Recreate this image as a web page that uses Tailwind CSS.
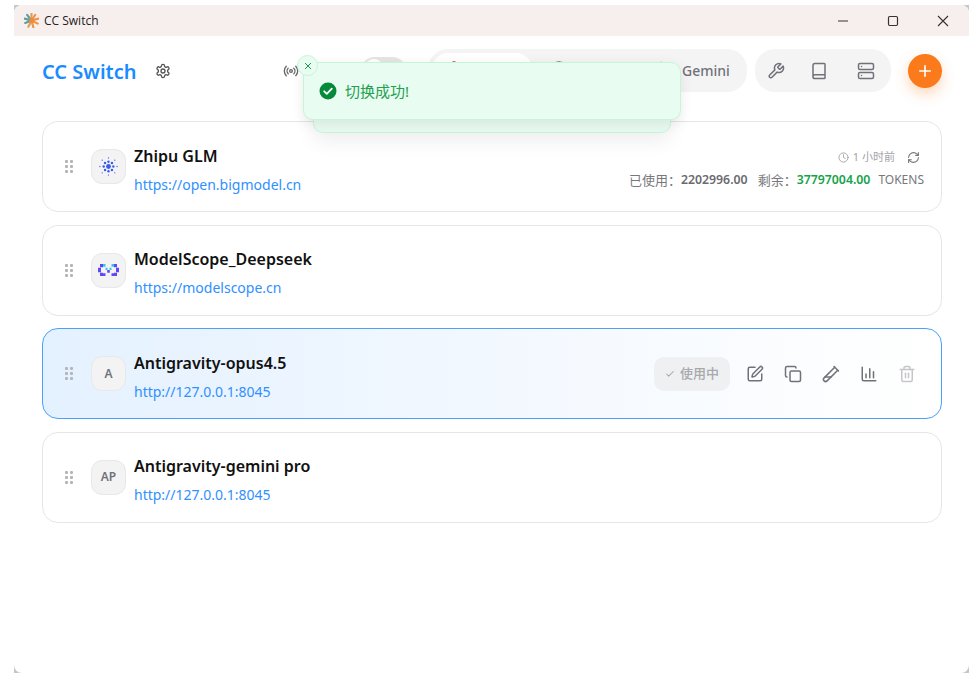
<!DOCTYPE html>
<html lang="zh"><head><meta charset="utf-8"><title>CC Switch</title>
<script src="https://cdn.jsdelivr.net/npm/@tailwindcss/browser@4"></script></head>
<body class="bg-white font-['Noto_Sans','Noto_Sans_CJK_SC',sans-serif] w-[979px] h-[686px] overflow-hidden">
<div class="ml-[14px] mt-[5px] w-[955px] h-[668px] bg-[#c6c6c6]">
<div class="relative w-full h-full bg-white rounded-[8px] overflow-hidden flex flex-col">
  <!-- title bar -->
  <div class="h-[31px] shrink-0 bg-[#f7efee] flex items-center pl-[10px]">
    <svg class="w-[15px] h-[15px]" viewBox="0 0 24 24" fill="none" stroke-width="3.4" stroke-linecap="round">
      <path stroke="#5f9ea0" d="M12 12 5 3M12 12 1 9M12 12 2 16"/>
      <path stroke="#d9a05b" d="M12 12 12 1M12 12 7 22"/>
      <path stroke="#ee9448" d="M12 12 18 3M12 12 23 9M12 12 22 17M12 12 15 23"/>
      <circle cx="12" cy="12" r="4" fill="#ee8a3e"/>
    </svg>
    <span class="ml-[5px] text-[12px] text-[#222] font-['Open_Sans',sans-serif]">CC Switch</span>
    <div class="ml-auto flex items-center h-full text-[#222]">
      <div class="w-[50px] flex justify-center"><svg class="w-[12px] h-[12px]" viewBox="0 0 12 12"><path d="M1 6h10" stroke="#333" stroke-width="1"/></svg></div>
      <div class="w-[50px] flex justify-center"><svg class="w-[12px] h-[12px]" viewBox="0 0 12 12" fill="none"><rect x="1.5" y="1.5" width="9" height="9" rx="1.2" stroke="#333" stroke-width="1.2"/></svg></div>
      <div class="w-[50px] mr-[1px] flex justify-center"><svg class="w-[12px] h-[12px]" viewBox="0 0 12 12" fill="none"><path d="M1 1l10 10M11 1 1 11" stroke="#333" stroke-width="1.1"/></svg></div>
    </div>
  </div>

  <!-- header -->
  <div class="h-[85px] shrink-0 pl-[28px] pr-[27px] flex items-center pb-[15px]">
    <span class="w-[93px] shrink-0 mt-[2px] whitespace-nowrap text-[20px] font-semibold text-[#1a8cff] leading-none">CC Switch</span>
    <svg class="ml-[20px] shrink-0 w-[16px] h-[16px] text-[#555]" viewBox="0 0 24 24" fill="none" stroke="currentColor" stroke-width="2" stroke-linecap="round" stroke-linejoin="round"><path d="M12.22 2h-.44a2 2 0 0 0-2 2v.18a2 2 0 0 1-1 1.73l-.43.25a2 2 0 0 1-2 0l-.15-.08a2 2 0 0 0-2.73.73l-.22.38a2 2 0 0 0 .73 2.73l.15.1a2 2 0 0 1 1 1.72v.51a2 2 0 0 1-1 1.74l-.15.09a2 2 0 0 0-.73 2.73l.22.38a2 2 0 0 0 2.73.73l.15-.08a2 2 0 0 1 2 0l.43.25a2 2 0 0 1 1 1.73V20a2 2 0 0 0 2 2h.44a2 2 0 0 0 2-2v-.18a2 2 0 0 1 1-1.73l.43-.25a2 2 0 0 1 2 0l.15.08a2 2 0 0 0 2.73-.73l.22-.39a2 2 0 0 0-.73-2.73l-.15-.08a2 2 0 0 1-1-1.74v-.5a2 2 0 0 1 1-1.74l.15-.09a2 2 0 0 0 .73-2.73l-.22-.38a2 2 0 0 0-2.73-.73l-.15.08a2 2 0 0 1-2 0l-.43-.25a2 2 0 0 1-1-1.73V4a2 2 0 0 0-2-2z"/><circle cx="12" cy="12" r="3"/></svg>

    <svg class="ml-[112px] shrink-0 w-[16px] h-[16px] text-[#666]" viewBox="0 0 24 24" fill="none" stroke="currentColor" stroke-width="2" stroke-linecap="round" stroke-linejoin="round"><path d="M4.9 19.1C1 15.2 1 8.8 4.9 4.9"/><path d="M7.8 16.2c-2.3-2.3-2.3-6.1 0-8.5"/><circle cx="12" cy="12" r="2"/><path d="M16.2 7.8c2.3 2.3 2.3 6.1 0 8.5"/><path d="M19.1 4.9C23 8.8 23 15.1 19.1 19"/></svg>
    <div class="ml-[63px] shrink-0 w-[43px] h-[24px] rounded-full bg-[#e5e5e5] mt-[-4px]"><div class="w-[20px] h-[20px] m-[2px] rounded-full bg-white"></div></div>

    <div class="ml-[23px] mt-[-1px] shrink-0 w-[319px] h-[43px] rounded-[20px] bg-[#f4f4f5] flex items-center p-[4px] text-[14px] font-medium text-[#71717a]">
      <div class="w-[100px] h-[35px] rounded-[16px] bg-white flex items-center justify-center gap-[10px] text-[#333]"><svg class="w-[20px] h-[20px]" viewBox="2 2 20 20"><path d="M12 2v20M2 12h20M5 5l14 14M19 5 5 19" stroke="#d97757" stroke-width="3"/></svg>Claude</div>
      <div class="w-[104px] flex items-center justify-center gap-[8px]"><svg class="w-[20px] h-[20px]" viewBox="1.500 1.500 21 21"><circle cx="12" cy="12" r="9" fill="none" stroke="#666" stroke-width="2.500"/></svg>Codex</div>
      <div class="flex-1 flex items-center justify-center gap-[11px] pl-[2px]"><svg class="w-[20px] h-[20px]" viewBox="2 2 20 20"><path d="M12 2c1 6 4 9 10 10-6 1-9 4-10 10-1-6-4-9-10-10 6-1 9-4 10-10z" fill="#d0453a"/></svg>Gemini</div>
    </div>

    <div class="ml-[8px] mt-[-1px] shrink-0 w-[136px] h-[43px] rounded-[20px] bg-[#f4f4f5] flex items-center pl-[12px] text-[#71717a]">
      <svg class="w-[18px] h-[18px]" viewBox="0 0 24 24" fill="none" stroke="currentColor" stroke-width="2" stroke-linecap="round" stroke-linejoin="round"><path d="M14.7 6.3a1 1 0 0 0 0 1.4l1.6 1.6a1 1 0 0 0 1.4 0l3.77-3.77a6 6 0 0 1-7.94 7.94l-6.91 6.91a2.12 2.12 0 0 1-3-3l6.91-6.91a6 6 0 0 1 7.94-7.94l-3.76 3.76z"/></svg>
      <svg class="ml-[25px] w-[18px] h-[18px]" viewBox="0 0 24 24" fill="none" stroke="currentColor" stroke-width="2" stroke-linecap="round" stroke-linejoin="round"><path d="M4 19.5v-15A2.5 2.5 0 0 1 6.5 2H19a1 1 0 0 1 1 1v18a1 1 0 0 1-1 1H6.5a2.5 2.5 0 0 1 -2.5-2.5a2.5 2.5 0 0 1 2.5-2.5H20"/></svg>
      <svg class="ml-[29px] w-[18px] h-[18px]" viewBox="0 0 24 24" fill="none" stroke="currentColor" stroke-width="2" stroke-linecap="round" stroke-linejoin="round"><rect x="2" y="2" width="20" height="8" rx="2"/><rect x="2" y="14" width="20" height="8" rx="2"/><path d="M6 6h.01M6 18h.01"/></svg>
    </div>

    <div class="ml-[17px] shrink-0 w-[34px] h-[34px] rounded-full bg-[#fb7a1c] flex items-center justify-center shadow-[0_6px_14px_rgba(251,122,28,0.3)]">
      <svg class="w-[18px] h-[18px]" viewBox="0 0 24 24" fill="none" stroke="#fff" stroke-width="2.2" stroke-linecap="round"><path d="M5 12h14M12 5v14"/></svg>
    </div>
  </div>

  <!-- list -->
  <div class="ml-[28px] w-[900px] flex flex-col gap-[12.67px]">
    <!-- card 1 -->
    <div class="h-[91px] rounded-[16px] border border-[#e6e6e8] bg-white flex items-center px-[22px]">
      <svg class="w-[8px] h-[13px] shrink-0 text-[#b5b5b8]" viewBox="0 0 8 13" fill="currentColor"><rect x="0" y="0" width="3" height="3" rx="1"/><rect x="5" y="0" width="3" height="3" rx="1"/><rect x="0" y="5" width="3" height="3" rx="1"/><rect x="5" y="5" width="3" height="3" rx="1"/><rect x="0" y="10" width="3" height="3" rx="1"/><rect x="5" y="10" width="3" height="3" rx="1"/></svg>
      <div class="ml-[18px] w-[35px] h-[35px] shrink-0 rounded-[11px] bg-[#f3f3f4] border border-[#e8e8ea] flex items-center justify-center">
        <svg class="w-[21px] h-[21px]" viewBox="0 0 20 20" fill="#3b5bf0"><circle cx="10" cy="10" r="2.3"/><circle cx="10" cy="5.4" r="1.15"/><circle cx="10" cy="14.6" r="1.15"/><circle cx="5.4" cy="10" r="1.15"/><circle cx="14.6" cy="10" r="1.15"/><circle cx="6.7" cy="6.7" r="1.15"/><circle cx="13.3" cy="6.7" r="1.15"/><circle cx="6.7" cy="13.3" r="1.15"/><circle cx="13.3" cy="13.3" r="1.15"/><circle cx="10" cy="1.8" r=".6"/><circle cx="10" cy="18.2" r=".6"/><circle cx="1.8" cy="10" r=".6"/><circle cx="18.2" cy="10" r=".6"/><circle cx="4" cy="4" r=".6"/><circle cx="16" cy="4" r=".6"/><circle cx="4" cy="16" r=".6"/><circle cx="16" cy="16" r=".6"/></svg>
      </div>
      <div class="ml-[8px] pt-[6px] flex flex-col gap-[8px]">
        <div class="text-[16px] leading-[22px] font-semibold text-[#111]">Zhipu GLM</div>
        <div class="text-[14px] leading-[20px] text-[#3090ff]">https://open.bigmodel.cn</div>
      </div>
      <div class="ml-auto mr-[-5px] mt-[4px] flex flex-col items-end gap-[5px]">
        <div class="flex items-center text-[11px] leading-[18px] text-[#a3a3a8]">
          <svg class="w-[11px] h-[11px] mr-[4px]" viewBox="0 0 24 24" fill="none" stroke="currentColor" stroke-width="2" stroke-linecap="round"><circle cx="12" cy="12" r="10"/><path d="M12 6v6l4 2"/></svg>
          <span>1 小时前</span>
          <svg class="w-[13px] h-[13px] ml-[12px] mr-[4px] text-[#777]" viewBox="0 0 24 24" fill="none" stroke="currentColor" stroke-width="2" stroke-linecap="round" stroke-linejoin="round"><path d="M3 12a9 9 0 0 1 9-9 9.75 9.75 0 0 1 6.74 2.74L21 8"/><path d="M21 3v5h-5"/><path d="M21 12a9 9 0 0 1-9 9 9.75 9.75 0 0 1-6.74-2.74L3 16"/><path d="M8 16H3v5"/></svg>
        </div>
        <div class="flex items-center text-[12px] leading-[18px] text-[#77777c]">
          <span class="text-[13px]">已使用：</span><span class="text-[12.3px] font-semibold text-[#6b6b70]">2202996.00</span>
          <span class="ml-[10px] text-[13px]">剩余：</span><span class="text-[12.3px] font-semibold text-[#16a34a]">37797004.00</span>
          <span class="ml-[8px]">TOKENS</span>
        </div>
      </div>
    </div>

    <!-- card 2 -->
    <div class="h-[91px] rounded-[16px] border border-[#e6e6e8] bg-white flex items-center px-[22px]">
      <svg class="w-[8px] h-[13px] shrink-0 text-[#b5b5b8]" viewBox="0 0 8 13" fill="currentColor"><rect x="0" y="0" width="3" height="3" rx="1"/><rect x="5" y="0" width="3" height="3" rx="1"/><rect x="0" y="5" width="3" height="3" rx="1"/><rect x="5" y="5" width="3" height="3" rx="1"/><rect x="0" y="10" width="3" height="3" rx="1"/><rect x="5" y="10" width="3" height="3" rx="1"/></svg>
      <div class="ml-[18px] w-[35px] h-[35px] shrink-0 rounded-[11px] bg-[#f3f3f4] border border-[#e8e8ea] flex items-center justify-center">
        <svg class="w-[21px] h-[12px]" viewBox="0 0 21 11" preserveAspectRatio="none"><path fill="#5f49f5" d="M2 0h3v3H2zM0 3.500h3V7.500H0zM2 8h3v3H2zM16 0h3v3h-3zM18 3.500h3V7.500h-3zM16 8h3v3h-3zM5 8.500h2.500V11H5zM13.500 8.500H16V11h-2.500zM9.200 5.500h2.600V8H9.200z"/><path fill="#36c5e8" d="M5 0h2.500v2.500H5zM13.500 0H16v2.500h-2.500zM7.500 3.500h2v2h-2zM11.500 3.500h2v2h-2z"/></svg>
      </div>
      <div class="ml-[8px] pt-[6px] flex flex-col gap-[8px]">
        <div class="text-[16px] leading-[22px] font-semibold text-[#111]">ModelScope_Deepseek</div>
        <div class="text-[14px] leading-[20px] text-[#3090ff]">https://modelscope.cn</div>
      </div>
    </div>

    <!-- card 3 active -->
    <div class="h-[91px] rounded-[16px] border border-[#4aa0fb] bg-gradient-to-r from-[#e4f1ff] via-[#f8fbff] via-70% to-white flex items-center px-[22px]">
      <svg class="w-[8px] h-[13px] shrink-0 text-[#b5b5b8]" viewBox="0 0 8 13" fill="currentColor"><rect x="0" y="0" width="3" height="3" rx="1"/><rect x="5" y="0" width="3" height="3" rx="1"/><rect x="0" y="5" width="3" height="3" rx="1"/><rect x="5" y="5" width="3" height="3" rx="1"/><rect x="0" y="10" width="3" height="3" rx="1"/><rect x="5" y="10" width="3" height="3" rx="1"/></svg>
      <div class="ml-[18px] w-[35px] h-[35px] shrink-0 rounded-[11px] bg-[#f3f3f4] border border-[#e8e8ea] flex items-center justify-center text-[12px] font-semibold text-[#71717a]">A</div>
      <div class="ml-[8px] pt-[6px] flex flex-col gap-[8px]">
        <div class="text-[16px] leading-[22px] font-semibold text-[#111]">Antigravity-opus4.5</div>
        <div class="text-[14px] leading-[20px] text-[#3090ff]">http://127.0.0.1:8045</div>
      </div>
      <div class="ml-auto mr-[-5px] flex items-center text-[#71717a]">
        <div class="w-[76px] h-[34px] rounded-[10px] bg-[#eff0f2] flex items-center justify-center gap-[5px] text-[13px] font-medium text-[#a8a8ad]">
          <svg class="w-[10px] h-[10px]" viewBox="0 0 24 24" fill="none" stroke="currentColor" stroke-width="2.5" stroke-linecap="round" stroke-linejoin="round"><path d="M20 6 9 17l-5-5"/></svg>使用中
        </div>
        <div class="w-[194px] pl-[16px] pr-[8px] flex items-center justify-between">
          <svg class="w-[18px] h-[18px]" viewBox="0 0 24 24" fill="none" stroke="currentColor" stroke-width="2" stroke-linecap="round" stroke-linejoin="round"><path d="M12 3H5a2 2 0 0 0-2 2v14a2 2 0 0 0 2 2h14a2 2 0 0 0 2-2v-7"/><path d="M18.375 2.625a1 1 0 0 1 3 3l-9.013 9.014a2 2 0 0 1-.853.505l-2.873.84a.5.5 0 0 1-.62-.62l.84-2.873a2 2 0 0 1 .506-.852z"/></svg>
          <svg class="w-[18px] h-[18px]" viewBox="0 0 24 24" fill="none" stroke="currentColor" stroke-width="2" stroke-linecap="round" stroke-linejoin="round"><rect x="8" y="8" width="14" height="14" rx="2"/><path d="M4 16c-1.1 0-2-.9-2-2V4c0-1.1.9-2 2-2h10c1.1 0 2 .9 2 2"/></svg>
          <svg class="w-[18px] h-[18px]" viewBox="0 0 24 24" fill="none" stroke="currentColor" stroke-width="2" stroke-linecap="round" stroke-linejoin="round"><path d="M21 7 6.82 21.180a2.830 2.830 0 0 1-3.990-.010a2.830 2.830 0 0 1 0-4L17 3"/><path d="m16 2 6 6"/><path d="M12 16H4"/></svg>
          <svg class="w-[18px] h-[18px]" viewBox="0 0 24 24" fill="none" stroke="currentColor" stroke-width="2" stroke-linecap="round" stroke-linejoin="round"><path d="M3 3v16a2 2 0 0 0 2 2h16"/><path d="M8 17v-5"/><path d="M13 17V5"/><path d="M18 17V9"/></svg>
          <svg class="w-[18px] h-[18px] text-[#c6c6ca]" viewBox="0 0 24 24" fill="none" stroke="currentColor" stroke-width="2" stroke-linecap="round" stroke-linejoin="round"><path d="M3 6h18"/><path d="M19 6v14c0 1-1 2-2 2H7c-1 0-2-1-2-2V6"/><path d="M8 6V4c0-1 1-2 2-2h4c1 0 2 1 2 2v2"/><path d="M10 11v6"/><path d="M14 11v6"/></svg>
        </div>
      </div>
    </div>

    <!-- card 4 -->
    <div class="h-[91px] rounded-[16px] border border-[#e6e6e8] bg-white flex items-center px-[22px]">
      <svg class="w-[8px] h-[13px] shrink-0 text-[#b5b5b8]" viewBox="0 0 8 13" fill="currentColor"><rect x="0" y="0" width="3" height="3" rx="1"/><rect x="5" y="0" width="3" height="3" rx="1"/><rect x="0" y="5" width="3" height="3" rx="1"/><rect x="5" y="5" width="3" height="3" rx="1"/><rect x="0" y="10" width="3" height="3" rx="1"/><rect x="5" y="10" width="3" height="3" rx="1"/></svg>
      <div class="ml-[18px] w-[35px] h-[35px] shrink-0 rounded-[11px] bg-[#f3f3f4] border border-[#e8e8ea] flex items-center justify-center text-[12px] font-semibold text-[#71717a]">AP</div>
      <div class="ml-[8px] pt-[6px] flex flex-col gap-[8px]">
        <div class="text-[16px] leading-[22px] font-semibold text-[#111]">Antigravity-gemini pro</div>
        <div class="text-[14px] leading-[20px] text-[#3090ff]">http://127.0.0.1:8045</div>
      </div>
    </div>
  </div>

  <!-- toasts (overlay) -->
  <div class="absolute left-[299px] top-[85px] w-[358px] h-[43px] rounded-[10px] bg-[#e8fbf0] border border-[#c4f5d8] shadow-[0_8px_20px_rgba(0,0,0,0.07)]"></div>
  <div class="absolute left-[289px] top-[57px] w-[378px] h-[58px] rounded-[10px] bg-[#e9fcf2] border border-[#c4f5d8] shadow-[0_4px_14px_rgba(0,0,0,0.08)] flex items-center pl-[15px]">
    <svg class="w-[18px] h-[18px]" viewBox="0 0 18 18"><circle cx="9" cy="9" r="8.500" fill="#058a3a"/><path d="M5.200 9.300l2.600 2.500 5-5.200" fill="none" stroke="#fff" stroke-width="1.800" stroke-linecap="round" stroke-linejoin="round"/></svg>
    <span class="ml-[8px] text-[15px] text-[#22a04f]">切换成功!</span>
  </div>
  <div class="absolute left-[283px] top-[50px] w-[21px] h-[21px] rounded-full bg-[#e9fcf2] border border-[#c4f5d8] flex items-center justify-center">
    <svg class="w-[10px] h-[10px]" viewBox="0 0 10 10" fill="none"><path d="M2 2l6 6M8 2 2 8" stroke="#1f9a50" stroke-width="1"/></svg>
  </div>
</div>
</div>
</body></html>
